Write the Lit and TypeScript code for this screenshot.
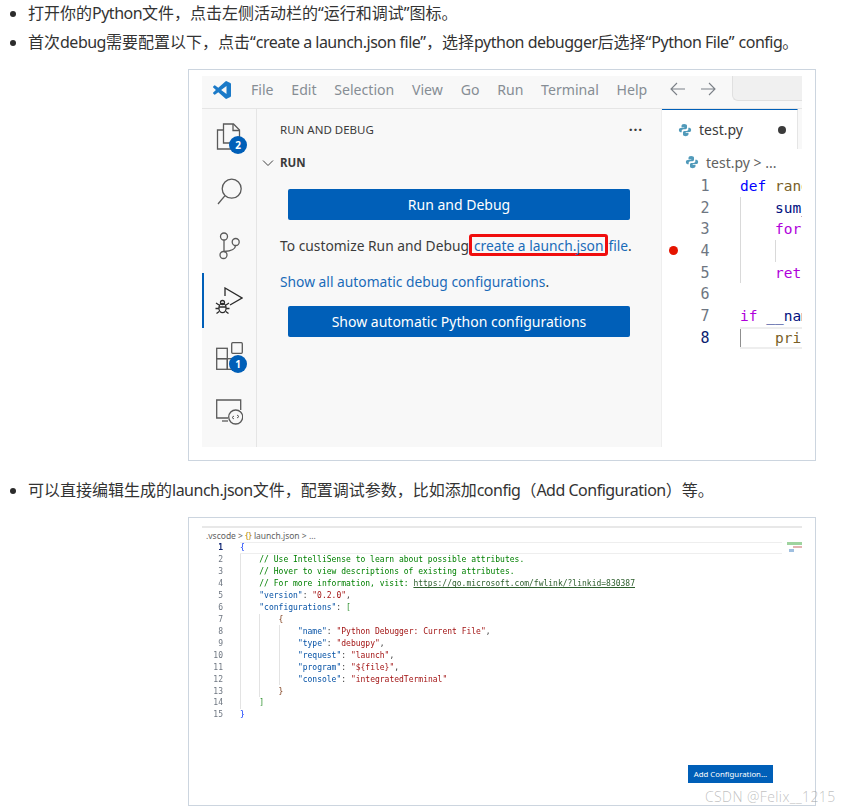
import { LitElement, html, css, svg } from "lit";
import { customElement } from "lit/decorators.js";

const VS_LOGO = "M23.15 2.587L18.21.21a1.494 1.494 0 0 0-1.705.29l-9.46 8.63-4.12-3.128a.999.999 0 0 0-1.276.057L.327 7.261A1 1 0 0 0 .326 8.74L3.899 12 .326 15.26a1 1 0 0 0 .001 1.479L1.65 17.94a.999.999 0 0 0 1.276.057l4.12-3.128 9.46 8.63a1.492 1.492 0 0 0 1.704.29l4.942-2.377A1.5 1.5 0 0 0 24 20.06V3.939a1.5 1.5 0 0 0-.85-1.352zm-5.146 14.861L10.826 12l7.178-5.448v10.896z";

const ICONS = [
  svg`<path d="M8.5 20V1h10l6 6v13z"/><path d="M18 1v6.5h6.5"/><path d="M8.5 7H2.5v19H19v-6"/>`,
  svg`<circle cx="16.7" cy="10.7" r="9.5"/><path d="M9.8 17.8L3 26"/>`,
  svg`<circle cx="9" cy="4.5" r="3.5"/><circle cx="20.7" cy="10" r="3.5"/><circle cx="8.5" cy="23" r="3.5"/><path d="M9 8v11.5"/><path d="M20.5 13.5c0 3-4 5.5-11.5 6"/>`,
  svg`<g stroke="#2b2b2b" transform="translate(0 -1)"><path d="M10 10V2l17 10-12 7"/><ellipse cx="7.5" cy="22" rx="3.6" ry="4.6"/><circle cx="7.5" cy="16.5" r="2"/><path d="M4 19l-3-2M11 19l3-2M3.800 22.500H.500M11.200 22.500h3.300M4.200 25.500L1.500 27.500M10.800 25.500l2.700 2M4 21h7"/></g>`,
  svg`<rect x="1.700" y="6.300" width="10.600" height="10.400"/><rect x="1.700" y="16.700" width="10.600" height="10.600"/><rect x="12.300" y="16.700" width="10.600" height="10.600"/><rect x="16.700" y=".7" width="10.600" height="10.600" rx="1"/>`,
  svg`<path d="M13 21H1.700V3h24v10"/><path d="M7 24h6"/><circle cx="20.700" cy="20" r="7"/><path d="M17 20.500l2-1.500M17 20.500l2 1.500M24 19.500l-2-1.500M24 19.500l-2 1.500" stroke-width="1"/>`,
];

const BADGES: Record<number, string> = { 0: "2", 4: "1" };

const MENUS = ["File", "Edit", "Selection", "View", "Go", "Run", "Terminal", "Help"];

const pyIcon = svg`<path d="M6 1C3.800 1 3 2 3 3.300V5h3.200v.6H2C.800 5.600 0 6.600 0 8s.8 2.500 2 2.500h1.200V9c0-1.100 1-2 2.100-2h2.300c1 0 1.700-.8 1.700-1.700V3C9.300 1.800 8.100 1 6 1z" fill="#519aba"/><path d="M8 15c2.200 0 3-1 3-2.300V11H7.800v-.6H12c1.200 0 2-1 2-2.400s-.8-2.500-2-2.500h-1.200V7c0 1.100-1 2-2.100 2H6.400c-1 0-1.700.8-1.700 1.700V13c0 1.200 1.200 2 3.300 2z" fill="#519aba"/>`;

type Seg = [string, string];
const PY: { n: string; g: number; segs: Seg[]; cur?: boolean; bp?: boolean }[] = [
  { n: "1", g: 0, segs: [["#0000ff", "def "], ["#795e26", "rang"]] },
  { n: "2", g: 1, segs: [["#001080", "sum_"]] },
  { n: "3", g: 1, segs: [["#af00db", "for "]] },
  { n: "4", g: 2, segs: [], bp: true },
  { n: "5", g: 1, segs: [["#af00db", "ret"]] },
  { n: "6", g: 0, segs: [] },
  { n: "7", g: 0, segs: [["#af00db", "if "], ["#001080", "__nam"]] },
  { n: "8", g: 1, segs: [["#795e26", "pri"]], cur: true },
];

const K = "#0451a5";
const S = "#a31515";
const C = "#008000";
const P = "#3b3b3b";
const JSON_LINES: { g: number; segs: Seg[]; link?: string }[] = [
  { g: 0, segs: [["#0431fa", "{"]] },
  { g: 1, segs: [[C, "// Use IntelliSense to learn about possible attributes."]] },
  { g: 1, segs: [[C, "// Hover to view descriptions of existing attributes."]] },
  { g: 1, segs: [[C, "// For more information, visit: "]], link: "https://go.microsoft.com/fwlink/?linkid=830387" },
  { g: 1, segs: [[K, '"version"'], [P, ": "], [S, '"0.2.0"'], [P, ","]] },
  { g: 1, segs: [[K, '"configurations"'], [P, ": "], ["#319331", "["]] },
  { g: 2, segs: [["#7b3814", "{"]] },
  { g: 3, segs: [[K, '"name"'], [P, ": "], [S, '"Python Debugger: Current File"'], [P, ","]] },
  { g: 3, segs: [[K, '"type"'], [P, ": "], [S, '"debugpy"'], [P, ","]] },
  { g: 3, segs: [[K, '"request"'], [P, ": "], [S, '"launch"'], [P, ","]] },
  { g: 3, segs: [[K, '"program"'], [P, ": "], [S, '"${file}"'], [P, ","]] },
  { g: 3, segs: [[K, '"console"'], [P, ": "], [S, '"integratedTerminal"']] },
  { g: 2, segs: [["#7b3814", "}"]] },
  { g: 1, segs: [["#319331", "]"]] },
  { g: 0, segs: [["#0431fa", "}"]] },
];

@customElement("app-root")
export class AppRoot extends LitElement {
  static styles = css`
    :host {
      display: block;
      position: relative;
      height: 811px;
      overflow: hidden;
      background: #fff;
      color: #333;
      font-family: "Noto Sans", "Noto Sans CJK SC", sans-serif;
    }
    ul { margin: 0; padding: 0 0 0 28px; font-size: 15px; list-style: disc; }
    li { line-height: 26px; margin-bottom: 2.500px; height: 26px; white-space: nowrap; }
    li::marker { color: #2b2b2b; font-size: 16px; }
    .cjk { font-size: 16px; }
    .lat { letter-spacing: -0.500px; }
    .fig {
      box-sizing: border-box;
      width: 628px;
      margin-left: 188px;
      border: 1px solid #ccd5df;
      position: relative;
    }
    .f1 { height: 392px; margin-top: 14.500px; margin-bottom: 16px; padding: 6px 13px 0; }
    .f2 { height: 289px; margin-top: 14px; padding: 7px 13px 0; display: flex; flex-direction: column; }

    .win { height: 371px; display: flex; flex-direction: column; overflow: hidden; background: #fff; font-size: 14px; color: #3b3b3b; }
    .title { height: 26px; padding-bottom: 6px; flex: none; display: flex; align-items: center; background: #f8f8f8; border-bottom: 1px solid #e5e5e5; box-sizing: content-box; }
    .logo { width: 18px; height: 18px; margin-left: 11px; margin-right: 20px; margin-top: 1px; flex: none; fill: #1b7ac8; }
    .menus { display: flex; gap: 17.750px; color: #868d94; font-size: 14.100px; width: 411px; flex: none; }
    .nav { width: 16px; height: 16px; flex: none; stroke: #7b8087; fill: none; stroke-width: 1.100; margin-right: 14px; }
    .navs { display: flex; margin-left: 8px; width: 62px; flex: none; }
    .cmd { flex: 1; height: 25px; align-self: flex-start; background: #f0f0f0; border: 1px solid #e0e0e0; border-right: none; border-top: none; border-radius: 0 0 0 6px; box-sizing: border-box; }

    .body { flex: 1; display: flex; min-height: 0; }
    .act { width: 54px; flex: none; background: #f8f8f8; border-right: 1px solid #e5e5e5; box-sizing: content-box; }
    .ai { height: 55px; display: flex; align-items: center; justify-content: center; position: relative; box-sizing: border-box; }
    .ai:nth-child(3) { height: 54px; }
    .ai.on::before { content: ""; position: absolute; left: 0; top: 0; bottom: 0; width: 2px; background: #005fb8; }
    .ai svg { width: 28px; height: 28px; fill: none; stroke: #5a5a5a; stroke-width: 1.300; }
    .badge { position: absolute; left: 27px; top: 27px; width: 18px; height: 18px; border-radius: 50%; background: #005fb8; color: #fff; font-size: 10px; font-weight: 700; display: flex; align-items: center; justify-content: center; }

    .side { width: 405px; flex: none; background: #f8f8f8; border-right: 1px solid #eee; padding-left: 23px; box-sizing: border-box; }
    .shead { height: 40px; display: flex; align-items: center; justify-content: space-between; font-size: 11.500px; padding-right: 18px; }
    .dots { font-size: 14px; font-weight: 700; letter-spacing: 0.800px; line-height: 1; margin-top: 2px; }
    .srun { height: 27px; display: flex; align-items: center; font-size: 11.500px; font-weight: 700; position: relative; }
    .chev { position: absolute; left: -18px; width: 12px; height: 12px; stroke: #424242; fill: none; stroke-width: 1; }
    .btn { width: 342px; height: 31px; margin-left: 8px; background: #005fb8; color: #fff; border-radius: 2px; display: flex; align-items: center; justify-content: center; font-size: 14px; }
    .b1 { margin-top: 13px; }
    .b2 { margin-top: 14px; }
    .row { height: 22px; display: flex; align-items: center; white-space: pre; font-size: 13.800px; }
    .r1 { margin-top: 14px; }
    .r2 { margin-top: 14px; }
    .lnk { color: #1a6bb8; }
    .mark { border: 3px solid #f00e0e; border-radius: 3px; height: 22px; box-sizing: border-box; display: flex; align-items: center; padding: 0 2px; }

    .ed { flex: 1; background: #fff; min-width: 0; overflow: hidden; }
    .tabs { height: 40px; display: flex; background: #f8f8f8; }
    .tab { width: 136px; box-sizing: border-box; flex: none; background: #fff; border-top: 1.500px solid #005fb8; border-right: 1px solid #e5e5e5; display: flex; align-items: center; position: relative; padding-left: 16px; gap: 7px; font-size: 14px; }
    .tab svg, .crumb svg { width: 14px; height: 14px; flex: none; }
    .tdot { position: absolute; left: 116px; width: 8px; height: 8px; border-radius: 50%; background: #3b3b3b; }
    .crumb { height: 26px; display: flex; align-items: center; padding-left: 23px; gap: 7px; font-size: 14px; color: #616161; white-space: pre; }
    .pl { height: 21.700px; display: flex; align-items: center; font-family: "DejaVu Sans Mono", monospace; font-size: 14.500px; white-space: pre; }
    .gut { width: 22px; flex: none; display: flex; justify-content: center; }
    .bp { width: 9px; height: 9px; border-radius: 50%; background: #e51400; }
    .num { width: 42px; flex: none; text-align: center; color: #6e7681; font-size: 15px; }
    .cur .num { color: #0b216f; }
    .cd { margin-left: 14px; flex: 1; height: 100%; display: flex; align-items: center; min-width: 0; box-sizing: border-box; overflow: hidden; }
    .cur .cd { border-top: 2px solid #eee; border-bottom: 2px solid #eee; }
    .g { display: inline-block; width: 35px; height: 100%; box-sizing: border-box; border-left: 1px solid #d9d9d9; flex: none; }
    .cur .g { border-left-color: #8f8f8f; }

    .jhead { height: 2px; background: #e8e8e8; margin-top: 1px; flex: none; }
    .jcrumb { height: 14px; flex: none; display: flex; align-items: center; font-size: 8.500px; color: #616161; white-space: pre; padding-left: 4px; }
    .jcrumb i { font-style: normal; color: #b58900; }
    .jrows { flex: none; position: relative; filter: blur(0.2px); }
    .jl { height: 11.930px; display: flex; align-items: center; font-family: "DejaVu Sans Mono", monospace; font-size: 8px; white-space: pre; }
    .jn { width: 21px; flex: none; text-align: right; color: #6e7681; }
    .jl.first .jn { color: #0b216f; font-weight: 700; }
    .jc { margin-left: 17px; flex: 1; height: 100%; display: flex; align-items: center; box-sizing: border-box; margin-right: 20px; }
    .jl.first .jc { border-top: 1px solid #eee; border-bottom: 1px solid #eee; }
    .jg { display: inline-block; width: 19.300px; height: 100%; border-left: 1px solid #e3e3e3; box-sizing: border-box; flex: none; }
    .jlink { color: #2c5e2c; text-decoration: underline; }
    .mini { position: absolute; right: 0; top: 0; width: 15px; height: 10px; display: flex; flex-direction: column; gap: 1px; }
    .mini b { display: block; height: 2.500px; }
    .m1 { background: #9fd39f; }
    .m2 { background: #e3b3b3; margin-left: 6px; }
    .m3 { background: #9fbfe0; margin-right: 8px; margin-left: 2px; }
    .add { margin-top: auto; margin-bottom: 22px; align-self: flex-end; margin-right: 29px; width: 85px; height: 18px; background: #005fb8; color: #fff; font-size: 7.800px; display: flex; align-items: center; justify-content: center; }

    .wm { position: absolute; left: 705px; top: 787px; font-family: "Open Sans", sans-serif; font-weight: 300; font-size: 14px; letter-spacing: 0.400px; color: rgba(150, 150, 150, 0.6); white-space: pre; }
  `;

  private menu() {
    return MENUS.map((m) => html`<span>${m}</span>`);
  }

  private activity() {
    return ICONS.map((ic, i) => html`
      <div class="ai ${i === 3 ? "on" : ""}">
        <svg viewBox="0 0 28 28">${ic}</svg>
        ${BADGES[i] ? html`<span class="badge">${BADGES[i]}</span>` : null}
      </div>`);
  }

  private pyLines() {
    return PY.map((l) => html`
      <div class="pl ${l.cur ? "cur" : ""}">
        <div class="gut">${l.bp ? html`<span class="bp"></span>` : null}</div>
        <div class="num">${l.n}</div>
        <div class="cd">
          ${Array.from({ length: l.g }, () => html`<span class="g"></span>`)}
          ${l.segs.map(([c, t]) => html`<span style="color:${c}">${t}</span>`)}
        </div>
      </div>`);
  }

  private jsonLines() {
    return JSON_LINES.map((l, i) => html`
      <div class="jl ${i === 0 ? "first" : ""}">
        <div class="jn">${i + 1}</div>
        <div class="jc">
          ${Array.from({ length: l.g }, () => html`<span class="jg"></span>`)}
          ${l.segs.map(([c, t]) => html`<span style="color:${c}">${t}</span>`)}
          ${l.link ? html`<span class="jlink">${l.link}</span>` : null}
        </div>
      </div>`);
  }

  render() {
    return html`
      <ul>
        <li class="cjk"><span>打开你的</span><span class="lat">Python</span>文件，点击左侧活动栏的“运行和调试”图标。</li>
        <li class="cjk">首次<span class="lat">debug</span>需要配置以下，点击“<span class="lat">create a launch.json file</span>”，选择<span class="lat">python debugger</span>后选择“<span class="lat">Python File</span>” <span class="lat">config</span>。</li>
      </ul>
      <div class="fig f1">
        <div class="win">
          <div class="title">
            <svg class="logo" viewBox="0 0 24 24"><path d="${VS_LOGO}"/></svg>
            <div class="menus">${this.menu()}</div>
            <div class="navs">
              <svg class="nav" viewBox="0 0 16 16"><path d="M1 8h14M7 2L1 8l6 6"/></svg>
              <svg class="nav" viewBox="0 0 16 16"><path d="M1 8h14M9 2l6 6-6 6"/></svg>
            </div>
            <div class="cmd"></div>
          </div>
          <div class="body">
            <div class="act">${this.activity()}</div>
            <div class="side">
              <div class="shead"><span>RUN AND DEBUG</span><span class="dots">···</span></div>
              <div class="srun">
                <svg class="chev" viewBox="0 0 12 12"><path d="M1 3.500l5 5 5-5"/></svg>
                RUN
              </div>
              <div class="btn b1">Run and Debug</div>
              <div class="row r1">To customize Run and Debug<span class="mark lnk">create a launch.json</span><span class="lnk">file</span>.</div>
              <div class="row r2"><span class="lnk">Show all automatic debug configurations</span>.</div>
              <div class="btn b2">Show automatic Python configurations</div>
            </div>
            <div class="ed">
              <div class="tabs">
                <div class="tab"><svg viewBox="0 0 14 16">${pyIcon}</svg><span>test.py</span><span class="tdot"></span></div>
              </div>
              <div class="crumb"><svg viewBox="0 0 14 16">${pyIcon}</svg><span>test.py &gt; ...</span></div>
              ${this.pyLines()}
            </div>
          </div>
        </div>
      </div>
      <ul><li class="cjk">可以直接编辑生成的<span class="lat">launch.json</span>文件，配置调试参数，比如添加<span class="lat">config</span>（<span class="lat">Add Configuration</span>）等。</li></ul>
      <div class="fig f2">
        <div class="jhead"></div>
        <div class="jcrumb">.vscode &gt; <i>{}</i> launch.json &gt; ...</div>
        <div class="jrows">
          ${this.jsonLines()}
          <div class="mini"><b class="m1"></b><b class="m2"></b><b class="m3"></b></div>
        </div>
        <div class="add">Add Configuration...</div>
      </div>
      <div class="wm">CSDN @Felix__1215</div>
    `;
  }
}
